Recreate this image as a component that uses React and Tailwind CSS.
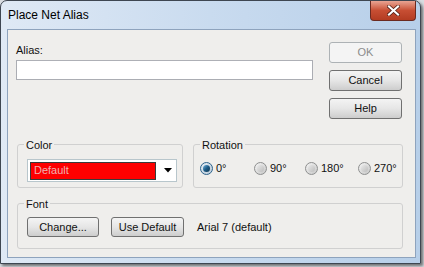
export default function App() {
  const font = { fontFamily: '"Liberation Sans", Arial, sans-serif' };
  const btn =
    "flex items-center justify-center rounded-[3px] border border-[#707070] bg-gradient-to-b from-[#f4f4f4] via-[#e6e6e6] to-[#cdcdcd] text-[11px] text-[#111]";
  const Radio = ({ checked }) => (
    <span
      className={
        "relative flex h-[13px] w-[13px] items-center justify-center rounded-full border " +
        (checked
          ? "border-[#2c628b] bg-gradient-to-br from-[#e6eef5] to-[#b9c9d8]"
          : "border-[#8e8f8f] bg-gradient-to-br from-[#f4f4f4] to-[#c7c7c7]")
      }
    >
      {checked ? (
        <span className="h-[7px] w-[7px] rounded-full bg-gradient-to-br from-[#6fb4e0] via-[#1c5a85] to-[#0e3650]" />
      ) : (
        <span className="h-[7px] w-[7px] rounded-full bg-gradient-to-br from-[#e8e8e8] to-[#bdbdbd]" />
      )}
    </span>
  );
  return (
    <div className="h-[267px] w-[424px] overflow-hidden bg-[#d9dde2]" style={font}>
      <div className="flex h-[264px] w-[421px] flex-col rounded-t-[7px] border border-[#3e4651] bg-gradient-to-r from-[#dfe9f5] via-[#c9dbef] to-[#b7cfe9] shadow-[2px_2px_3px_rgba(0,0,0,0.5)]">
        <div className="flex h-[28px] shrink-0 items-start justify-between">
          <span className="pl-[7px] pt-[5px] text-[12px] text-black">Place Net Alias</span>
          <div className="mr-[4px] flex h-[20px] w-[46px] items-center justify-center rounded-b-[4px] border border-t-0 border-[#6b2a20] bg-gradient-to-b from-[#e8a493] via-[#c74e33] to-[#b33c22]">
            <svg width="13" height="11" viewBox="0 0 13 11">
              <path d="M2 1.5 L11 9.5 M11 1.5 L2 9.5" stroke="#4a1a10" strokeWidth="3.6" strokeLinecap="square" />
              <path d="M2 1.5 L11 9.5 M11 1.5 L2 9.5" stroke="#ffffff" strokeWidth="2.2" strokeLinecap="square" />
            </svg>
          </div>
        </div>
        <div className="mb-[5px] ml-[6px] mr-[4px] flex-1 border border-[#8ea3bd] bg-[#efeeec] pl-[8px] pt-[11px]">
          <div className="flex h-[102px]">
            <div className="flex w-[297px] flex-col">
              <span className="h-[18px] text-[11px] leading-[18px] text-[#111]">Alias:</span>
              <div className="mt-[1px] h-[20px] w-[297px] border border-[#abadb3] border-t-[#aeb0b6] bg-white" />
            </div>
            <div className="ml-[16px] flex flex-col gap-[7px] pt-[1px]">
              <div className="flex h-[21px] w-[73px] items-center justify-center rounded-[3px] border border-[#adb2b5] bg-[#f4f4f4] text-[11px] text-[#8b8b8b]">
                OK
              </div>
              <div className={btn + " h-[21px] w-[73px]"}>Cancel</div>
              <div className={btn + " h-[21px] w-[73px]"}>Help</div>
            </div>
          </div>
          <div className="mt-[1px] flex gap-[10px]">
            <div className="relative ml-[1px] h-[44px] w-[166px] rounded-[3px] border border-[#d0d0d0] pl-[9px] pt-[14px]">
              <span className="absolute -top-[8px] left-[6px] bg-[#efeeec] px-[2px] text-[11px] text-[#111]">Color</span>
              <div className="flex h-[23px] w-[150px] items-center border border-[#b8c6cc] bg-white pl-[2px]">
                <div className="flex h-[18px] w-[126px] items-center border border-[#3a3a3a] bg-[#fe0000] pl-[3px] text-[11px] text-[#f0b0b0]">
                  Default
                </div>
                <svg className="ml-[8px]" width="8" height="5" viewBox="0 0 8 5">
                  <path d="M0 0 L8 0 L4 4.5 Z" fill="#000" />
                </svg>
              </div>
            </div>
            <div className="relative h-[44px] w-[210px] rounded-[3px] border border-[#d0d0d0] pl-[6px] pt-[15px]">
              <span className="absolute -top-[8px] left-[6px] bg-[#efeeec] px-[2px] text-[11px] text-[#111]">Rotation</span>
              <div className="flex items-center text-[11px] text-[#111]">
                <div className="flex w-[54px] items-center gap-[3px]">
                  <Radio checked />
                  <span>0°</span>
                </div>
                <div className="flex w-[51px] items-center gap-[3px]">
                  <Radio />
                  <span>90°</span>
                </div>
                <div className="flex w-[53px] items-center gap-[3px]">
                  <Radio />
                  <span>180°</span>
                </div>
                <div className="flex items-center gap-[3px]">
                  <Radio />
                  <span>270°</span>
                </div>
              </div>
            </div>
          </div>
          <div className="relative ml-[1px] mt-[15px] h-[46px] w-[386px] rounded-[3px] border border-[#d0d0d0] pl-[9px] pt-[13px]">
            <span className="absolute -top-[8px] left-[6px] bg-[#efeeec] px-[2px] text-[11px] text-[#111]">Font</span>
            <div className="flex items-center">
              <div className={btn + " h-[20px] w-[72px]"}>Change...</div>
              <div className={btn + " ml-[12px] h-[20px] w-[73px]"}>Use Default</div>
              <span className="ml-[13px] text-[11px] text-[#111]">Arial 7 (default)</span>
            </div>
          </div>
        </div>
      </div>
    </div>
  );
}
